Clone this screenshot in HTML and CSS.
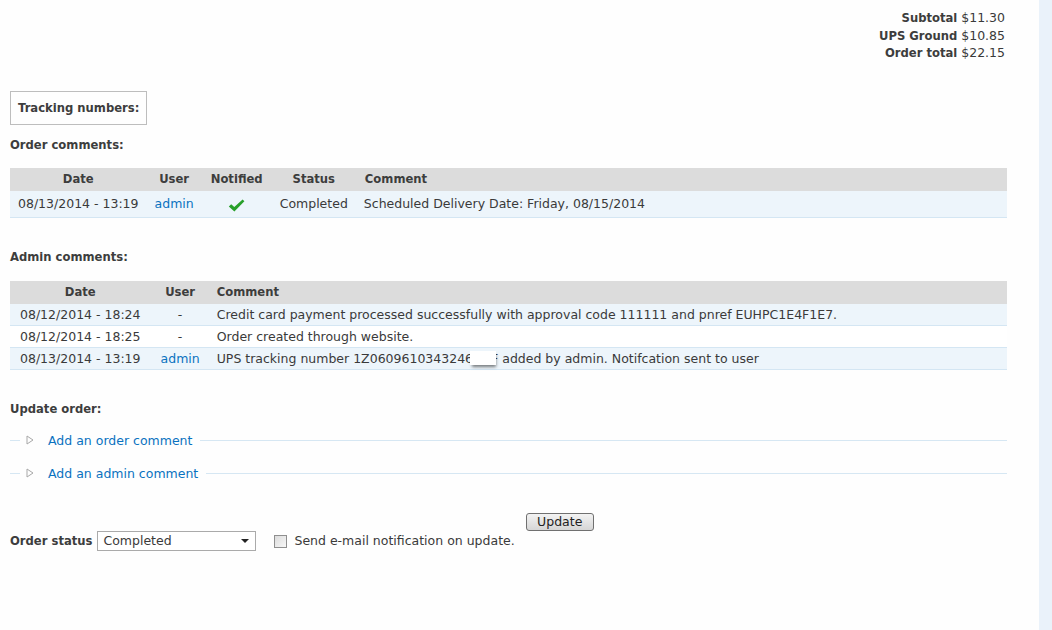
FILE: index.html
```html
<!DOCTYPE html>
<html>
<head>
<meta charset="utf-8">
<link rel="stylesheet" href="styles.css">
</head>
<body>
<div class="layout">
  <main class="main">
    <div class="totals">
      <div><b>Subtotal</b> $11.30</div>
      <div><b>UPS Ground</b> $10.85</div>
      <div><b>Order total</b> $22.15</div>
    </div>

    <div class="tracking"><b>Tracking numbers:</b></div>

    <h3 class="heading h-order">Order comments:</h3>
    <table class="grid grid-order">
      <thead>
        <tr><th class="c">Date</th><th class="c">User</th><th class="c">Notified</th><th class="c">Status</th><th class="l">Comment</th></tr>
      </thead>
      <tbody>
        <tr class="odd tall">
          <td class="c">08/13/2014 - 13:19</td>
          <td class="c"><a href="#">admin</a></td>
          <td class="c"><svg class="check" width="17" height="13" viewBox="0 0 17 13"><path d="M0.8 7.4 L3.2 5.3 L6.3 8.1 L14.6 0.6 L16.4 2.3 L6.4 12.4 Z" fill="#28a02a"/></svg></td>
          <td class="c">Completed</td>
          <td class="l">Scheduled Delivery Date: Friday, 08/15/2014</td>
        </tr>
      </tbody>
    </table>

    <h3 class="heading h-admin">Admin comments:</h3>
    <table class="grid grid-admin">
      <thead>
        <tr><th class="c">Date</th><th class="c">User</th><th class="l">Comment</th></tr>
      </thead>
      <tbody>
        <tr class="odd">
          <td class="c">08/12/2014 - 18:24</td>
          <td class="c">-</td>
          <td class="l">Credit card payment processed successfully with approval code 111111 and pnref EUHPC1E4F1E7.</td>
        </tr>
        <tr class="even">
          <td class="c">08/12/2014 - 18:25</td>
          <td class="c">-</td>
          <td class="l">Order created through website.</td>
        </tr>
        <tr class="odd">
          <td class="c">08/13/2014 - 13:19</td>
          <td class="c"><a href="#">admin</a></td>
          <td class="l">UPS tracking number 1Z0609610343246<span class="redact"></span>F added by admin. Notifcation sent to user</td>
        </tr>
      </tbody>
    </table>

    <h3 class="heading h-update">Update order:</h3>
    <div class="collapsible first">
      <span class="seg"></span>
      <svg class="tri" width="8" height="10" viewBox="0 0 8 10"><path d="M1 1 L7 5 L1 9 Z" fill="none" stroke="#a8a8a8" stroke-width="1"/></svg>
      <a href="#" class="toggle">Add an order comment</a>
      <span class="rule"></span>
    </div>
    <div class="collapsible">
      <span class="seg"></span>
      <svg class="tri" width="8" height="10" viewBox="0 0 8 10"><path d="M1 1 L7 5 L1 9 Z" fill="none" stroke="#a8a8a8" stroke-width="1"/></svg>
      <a href="#" class="toggle">Add an admin comment</a>
      <span class="rule"></span>
    </div>

    <div class="actions">
      <label class="status-label">Order status</label>
      <div class="select"><span>Completed</span><span class="arrow"></span></div>
      <span class="checkbox"></span>
      <span class="notify">Send e-mail notification on update.</span>
      <button class="btn">Update</button>
    </div>
  </main>
  <aside class="sidebar"></aside>
</div>
</body>
</html>
```

FILE: styles.css
```css
html, body {
  margin: 0;
  padding: 0;
  background: #ffffff;
}
body {
  font-family: "DejaVu Sans", Verdana, sans-serif;
  font-size: 12.5px;
  color: #3a3a3a;
}
.layout {
  display: flex;
  min-height: 630px;
}
.main {
  width: 997px;
  padding: 9px 32px 0 10px;
  background: #fefefe;
}
.sidebar {
  flex: 1;
  background: #eaf2fa;
}
a {
  color: #0a72c0;
  text-decoration: none;
}
b, th, .heading, .status-label {
  font-weight: bold;
  font-size: 11.6px;
  color: #3d3d3d;
}
.totals {
  text-align: right;
  padding-right: 2px;
}
.totals div {
  height: 17.5px;
  line-height: 17.5px;
}
.totals b {
  line-height: 1;
}
.tracking {
  display: inline-block;
  margin-top: 29px;
  border: 1px solid #bdbdbd;
  padding: 0 7px;
  line-height: 32px;
}
.heading {
  margin: 0;
  line-height: 17px;
}
.h-order { margin-top: 12px; }
.h-admin { margin-top: 31px; }
.h-update { margin-top: 31px; }
.grid {
  width: 100%;
  border-collapse: collapse;
}
.grid-order { margin-top: 14px; }
.grid-admin { margin-top: 15px; }
.grid th {
  background: #dcdcdc;
  height: 23px;
  padding: 0 9px;
  white-space: nowrap;
}
.grid td {
  height: 21px;
  padding: 0 8px;
  border-bottom: 1px solid #d4e6f3;
  white-space: nowrap;
}
.grid-admin th, .grid-admin td {
  padding: 0 10px;
}
.grid-admin td.l, .grid-admin th.l {
  padding-left: 7px;
}
.grid tr.tall td {
  height: 26px;
}
.grid .c {
  text-align: center;
  width: 1%;
}
.grid .l {
  text-align: left;
}
.odd td { background: #edf5fb; }
.even td { background: #ffffff; }
.check {
  display: block;
  margin: 3px auto 0;
}
.redact {
  display: inline-block;
  position: relative;
  z-index: 1;
  width: 26px;
  height: 14px;
  margin: 0 -5px 0 -3px;
  vertical-align: -2px;
  background: #ffffff;
  box-shadow: 1px 3px 3px -1px rgba(0,0,0,0.5);
}
.collapsible {
  display: flex;
  align-items: center;
  height: 33px;
}
.collapsible.first { margin-top: 6px; }
.seg {
  width: 10px;
  height: 1px;
  background: #d6e7f3;
}
.tri {
  margin: 0 0 0 6px;
}
.toggle {
  margin: 0 8px 0 14px;
}
.rule {
  flex: 1;
  height: 1px;
  background: #d6e7f3;
}
.actions {
  display: flex;
  align-items: flex-end;
  margin-top: 23px;
  height: 38px;
}
.status-label {
  line-height: 20px;
}
.select {
  margin-left: 5px;
  border: 1px solid #aaaaaa;
  background: #fff;
  display: flex;
  align-items: center;
  justify-content: space-between;
  padding: 0 6px 0 5px;
  box-sizing: border-box;
  width: 159px;
  height: 20px;
}
.arrow {
  width: 0;
  height: 0;
  border-left: 4px solid transparent;
  border-right: 4px solid transparent;
  border-top: 4px solid #222;
}
.checkbox {
  width: 11px;
  height: 11px;
  border: 1px solid #8f8f8f;
  background: linear-gradient(135deg, #dcdcdc, #f7f7f7);
  margin: 0 0 3px 18px;
}
.notify {
  margin-left: 7px;
  line-height: 20px;
}
.btn {
  align-self: flex-start;
  margin-left: 11px;
  font-family: "DejaVu Sans", Verdana, sans-serif;
  font-size: 12.5px;
  color: #222;
  width: 68px;
  height: 18px;
  padding: 0;
  border: 1px solid #707070;
  border-radius: 3px;
  background: linear-gradient(#f3f3f3, #e4e4e4 50%, #d6d6d6);
  line-height: 16px;
}
```
